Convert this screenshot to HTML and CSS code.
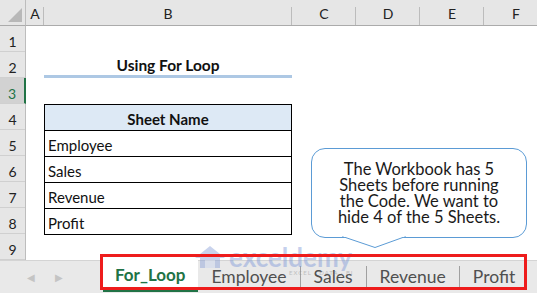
FILE: index.html
```html
<!DOCTYPE html>
<html>
<head>
<title>Using For Loop</title>
<link rel="stylesheet" href="styles.css">
</head>
<body>

<div class="book">

<div class="sheet">
<div class="corner"><span class="tri"></span></div>
<div class="colheads">
<div class="ch ch_a">A</div><div class="ch ch_b">B</div><div class="ch">C</div><div class="ch">D</div><div class="ch">E</div><div class="ch">F</div>
</div>
<div class="rowheads">
<div class="rh">1</div><div class="rh">2</div><div class="rh rh_sel">3</div><div class="rh">4</div><div class="rh">5</div><div class="rh">6</div><div class="rh">7</div><div class="rh">8</div><div class="rh">9</div>
</div>
<div class="cells">
<div class="title">Using For Loop</div>
<table class="names">
<tr><th>Sheet Name</th></tr>
<tr><td>Employee</td></tr>
<tr><td>Sales</td></tr>
<tr><td>Revenue</td></tr>
<tr><td>Profit</td></tr>
</table>

<div class="callout">
<p>The Workbook has 5<br>Sheets before running<br>the Code. We want to<br>hide 4 of the 5 Sheets.</p>
<svg class="tail" width="64" height="13" viewBox="0 0 64 13"><path d="M0.5 0.5 L33 11.5 L63.5 0.5" fill="#fff" stroke="#5b9bd5" stroke-width="1"/><rect x="1.5" y="0" width="61" height="1" fill="#fff"/></svg>
</div>
</div>
</div>

<div class="tabbar">
<div class="nav"><span class="arr">&#9664;</span><span class="arr">&#9654;</span></div>
<div class="tabs">
<div class="tab tab_on">For_Loop</div>
<div class="tab">Employee</div>
<div class="sep"></div>
<div class="tab">Sales</div>
<div class="sep"></div>
<div class="tab">Revenue</div>
<div class="sep"></div>
<div class="tab">Profit</div>
</div>
</div>

<div class="wmark">
<svg width="32" height="24" viewBox="0 0 32 24"><path d="M16 1 L31 13 L26 13 L26 23 L6 23 L6 13 L1 13 Z" fill="#8aa0d8"/><path d="M11 15 L21 15 L21 23 L11 23 Z" fill="#c8d3ef"/></svg>
<div class="wm_txt"><span class="wm_name">exceldemy</span><span class="wm_sub">EXCEL · DATA · BI</span></div>
</div>

<div class="redbox"></div>

</div>

</body>
</html>
```

FILE: styles.css
```css
body {margin:0;background:#fff;font-family:"Lato","Open Sans",sans-serif;}

.book {position:relative;width:537px;height:293px;overflow:hidden;}

.sheet {display:grid;grid-template-columns:26px 1fr;grid-template-rows:26px 234px;}

.corner {background:#e6e6e6;border-right:1px solid #bdbdbd;border-bottom:1px solid #ababab;box-sizing:border-box;position:relative;}
.corner .tri {position:absolute;right:3px;bottom:3px;width:0;height:0;border-left:14px solid transparent;border-bottom:14px solid #b8b8b8;}

.colheads {display:flex;background:#e6e6e6;border-bottom:1px solid #ababab;box-sizing:border-box;}
.ch {width:64px;flex:none;box-sizing:border-box;background:linear-gradient(#bcbcbc,#bcbcbc) right 7px / 1px 19px no-repeat;text-align:center;font-size:14px;line-height:24px;padding-top:2px;color:#222;}
.ch_a {width:18px;}
.ch_b {width:248px;}

.rowheads {display:flex;flex-direction:column;background:#e6e6e6;border-right:1px solid #bdbdbd;}
.rh {height:26px;box-sizing:border-box;border-bottom:1px solid #d0d0d0;font-size:14px;line-height:25px;padding-top:3px;text-align:center;color:#222;}
.rh_sel {background:#d2d2d2;color:#217346;border-right:2px solid #217346;margin-right:-1px;}

.cells {display:grid;grid-template-columns:18px 248px repeat(4, 64px);grid-template-rows:repeat(9, 26px);position:relative;}

.title {grid-column:2;grid-row:2;box-sizing:border-box;border-bottom:3px solid #adc8e4;text-align:center;font-weight:bold;font-size:15.5px;line-height:20px;padding-top:3px;color:#111;}

.names {grid-column:2;grid-row:4 / span 5;border-collapse:collapse;width:248px;table-layout:fixed;}
.names th, .names td {height:26px;box-sizing:border-box;border:1px solid #000;padding:2px 3px 0 3px;font-size:15px;color:#111;}
.names th {background:#dde9f5;font-weight:bold;text-align:center;}
.names td {text-align:left;}

.callout {position:absolute;left:285px;top:122px;width:216px;height:90px;box-sizing:border-box;border:1px solid #5b9bd5;border-radius:14px;background:#fff;display:flex;align-items:center;justify-content:center;}
.callout p {margin:0;text-align:center;font-size:16.5px;line-height:16px;color:#1a1a1a;}
.callout .tail {position:absolute;left:30px;bottom:-12px;}

.tabbar {display:flex;align-items:center;height:33px;background:#e9e9e9;border-top:1px solid #d4d4d4;box-sizing:border-box;}
.nav {width:100px;display:flex;gap:20px;padding-left:27px;box-sizing:border-box;}
.arr {color:#c4c4c4;font-size:10px;}

.tabs {display:flex;align-items:center;height:100%;padding-left:3px;}
.tab {font-size:17.5px;color:#505050;padding:0 13px;line-height:30px;}
.tab_on {background:#fff;color:#217346;font-weight:bold;font-size:17px;border-bottom:2px solid #217346;padding:0 13px 0 12px;height:30px;margin-top:-3px;}
.sep {width:1px;height:22px;background:#a0a0a0;}

.wmark {position:absolute;left:194px;top:245px;display:flex;align-items:flex-start;gap:3px;opacity:0.45;}
.wm_txt {display:flex;flex-direction:column;}
.wm_name {font-size:26px;font-weight:bold;color:#7f99d8;line-height:24px;}
.wm_sub {font-size:6px;color:#8c8c8c;letter-spacing:1px;padding-left:60px;}

.redbox {position:absolute;left:100px;top:254px;width:427px;height:36px;box-sizing:border-box;border:3px solid #ee1c1c;}
```
